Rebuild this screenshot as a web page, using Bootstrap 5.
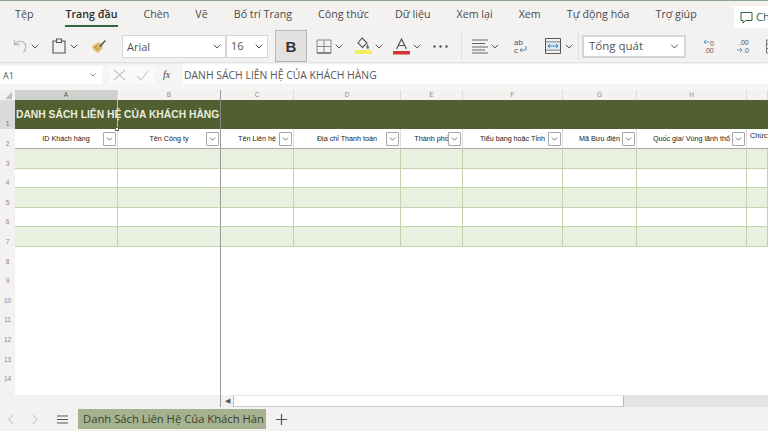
<!DOCTYPE html>
<html lang="vi">
<head>
<meta charset="utf-8">
<title>Danh sách liên hệ của khách hàng</title>
<link href="https://cdn.jsdelivr.net/npm/bootstrap@5.3.0/dist/css/bootstrap.min.css" rel="stylesheet">
<style>
html,body{width:768px;height:431px;overflow:hidden;background:#f3f2f1}
body{font-family:"Open Sans","Noto Sans",sans-serif;color:#444;display:flex;flex-direction:column}
.topline{height:1px;background:#8ea38f;flex:none}
.menu-row{height:29px;flex:none;font-size:10.7px;padding:0 0 2px 15px;gap:26px;color:#4a4a4a;overflow:hidden}
.menu-row .m-first{margin-right:6px}
.menu-row .m-on{font-weight:600;color:#2b2b2b;position:relative;height:100%;line-height:27px}
.menu-row .m-on::after{content:"";position:absolute;left:0;right:0;bottom:1px;height:2px;background:#33663f}
.cmt-btn{position:absolute;left:734px;top:5px;width:40px;height:22px;background:#fff;border-radius:2px;padding-left:6px;font-size:11px;color:#33663f;gap:3px}
.tool-row{height:32px;flex:none;background:#f3f2f1;box-shadow:0 1px 2px #d5d5d5;position:relative;z-index:3}
.tool-row svg{flex:none;display:block}
.ipt{height:23px;background:#fff;border:1px solid #d6d5d3;color:#555;flex:none}
.i-font{width:104px;margin-left:15px;font:11px "Open Sans",sans-serif;padding:0 4px}
.i-size{width:42px;margin-left:0;font-size:11px;padding:0 4px}
.i-fmt{width:104px;margin-left:3px;font-size:11.5px;padding:0 5px;border:2px solid #d6d5d3}
.b-btn{width:32px;height:32px;margin-left:7px;background:#e4e2e0;border:1px solid #b9b7b5;font:700 15px "Liberation Sans",sans-serif;color:#333;flex:none}
.t-undo{margin-left:13px}.t-c{margin-left:3px}.t-clip{margin-left:13px}.t-brush{margin-left:13px}
.t-bord{margin-left:9px}.t-fill{margin-left:12px}.t-a{margin-left:10px}.t-dots{margin-left:12px}
.t-sep{width:1px;height:28px;background:#e0dfdd;flex:none}.t-s1{margin-left:13px}.t-al{margin-left:10px}
.t-wrap{margin-left:14px}.t-mrg{margin-left:17px}.t-s2{margin-left:5px}
.t-d1{margin-left:17px}.t-d2{margin-left:18px}.t-d3{margin-left:15px}
.fx-row{height:28px;flex:none;background:#f5f5f4;position:relative}
.name-box{width:102px;height:18px;margin-top:4px;background:#fff;font:9px "Open Sans",sans-serif;padding:0 6px 0 3px;color:#555}
.fx-ic{width:46px;height:18px;margin:4px 0 0 7px;background:#fafafa;padding-left:4px;gap:10px;align-self:flex-start}
.fx-lbl{font:italic 10px "Liberation Serif",serif;color:#444;margin-left:8px;width:9px;line-height:18px;margin-top:4px;align-self:flex-start}
.fx-val{height:22px;flex:1;margin-left:11px;background:#fff;font-size:10.4px;line-height:26px;padding-left:1px;color:#555;white-space:nowrap;align-self:flex-start}
.sheet-grid{height:305px;flex:none;display:grid;grid-template-columns:15px 103px 103px 73px 107px 62px 100px 74px 110px 21px;grid-template-rows:10px 29px 20px repeat(12,19.6px) 1fr;background:#fff;font-family:"Liberation Sans",sans-serif}
.sheet-grid>div{min-width:0}
.ch{background:#f3f2f1;border-right:1px solid #dcdbd9;font:6.5px "Liberation Sans",sans-serif;color:#888;text-align:center;line-height:10px}
.ch-on{background:#d0d0ce;color:#555}
.ch-frz{border-right:1px solid #999}
.corner{background:#f3f2f1;display:flex;justify-content:flex-end;align-items:flex-end;padding:0 3px 1px 0}
.rh{background:#f3f2f1;font-size:6.5px;color:#888;display:flex;align-items:flex-end;justify-content:center;padding-bottom:1px;line-height:8px}
.rh-on{background:#dcdbd9;color:#666}
.ttl{background:#525f30;color:#e9eddf;font-weight:700;font-size:10.3px;line-height:29px;white-space:nowrap}
.ttl-a{padding-left:1px;border-right:1px solid #b9c0a8;position:relative;z-index:1}
.ttl-b{border-right:1px solid #888}
.ttl-r{grid-column:span 7}
.sel-dot{position:absolute;right:-2px;bottom:-2px;width:4px;height:4px;background:#fff;border:1px solid #4f6b3a;z-index:2}
.hd{position:relative;background:#fff;border-bottom:1px solid #a9a9a9;text-align:center;font-size:7.2px;line-height:20px;color:#222;white-space:nowrap;overflow:hidden}
.hd-b{border-right:1px solid #999}
.hd-last{text-align:left;line-height:13px;padding-left:3px}
.hd-ln{border-right:1px solid #ddd}
.flt{position:absolute;right:1px;top:3px;width:13px;height:14px;background:#fff;border:1px solid #a8a8a8;border-radius:1px;display:flex;align-items:center;justify-content:center}
.cl{border-right:1px solid #c6d2ae;border-bottom:1px solid #c6d2ae;background:#fff}
.cl-g{background:#e9f0df}
.cl-f{border-right:1px solid #999}
.ept-a{grid-column:span 2;border-right:1px solid #999}
.ept-b{grid-column:span 7}
.sb-row{height:12px;flex:none;display:flex;background:#f3f2f1}
.sb-side{width:221px;border-right:1px solid #999;flex:none}
.sb-arr{width:13px;background:#f1f1f1;border-right:1px solid #bbb;font-size:7px;display:flex;align-items:center;justify-content:center;color:#555;flex:none}
.sb-trk{width:390px;background:#fff;border-top:1px solid #e4e4e4;border-bottom:1px solid #ccc;border-right:1px solid #bbb;flex:none}
.sb-rest{flex:1;background:#e3e3e3}
.sheet-bar{height:24px;flex:none;background:#f3f2f1;position:relative}
.st-nav{margin-left:8px}
.st-menu{margin-left:19px}
.st-tab{margin-left:10px;width:188px;height:20px;background:#a6b18f;color:#37432a;font-size:11.25px;line-height:20px;padding-left:5px;white-space:nowrap;overflow:hidden}
.st-add{margin-left:10px}
</style>
</head>
<body>
<svg width="0" height="0" class="position-absolute">
  <symbol id="chev" viewBox="0 0 8 5"><path d="M.7.7 4 4 7.3.7" fill="none" stroke="#555" stroke-width="1"/></symbol>
</svg>
<div class="topline"></div>
<nav class="menu-row d-flex align-items-center position-relative">
  <span class="m-first">Tệp</span>
  <span class="m-on">Trang đầu</span>
  <span>Chèn</span>
  <span>Vẽ</span>
  <span>Bố trí Trang</span>
  <span>Công thức</span>
  <span>Dữ liệu</span>
  <span>Xem lại</span>
  <span>Xem</span>
  <span>Tự động hóa</span>
  <span>Trợ giúp</span>
  <span class="cmt-btn d-flex align-items-center">
    <svg width="13" height="13" viewBox="0 0 13 13"><path d="M1 1.500h11v8H5.500L3 12V9.500H1z" fill="none" stroke="#33663f" stroke-width="1"/></svg>
    <span>Ch</span>
  </span>
</nav>
<div class="tool-row d-flex align-items-center">
  <svg class="t-undo" width="15" height="16" viewBox="0 0 15 16"><path d="M1.500 1.500v5h5M1.800 6.300C3.500 3.500 7 2.500 10 4c3.500 2 3.800 6.500.5 10" fill="none" stroke="#b9b9b9" stroke-width="1.300"/></svg>
  <svg class="t-c" width="8" height="5"><use href="#chev"/></svg>
  <svg class="t-clip" width="14" height="16" viewBox="0 0 14 16"><path d="M1 3h12v12H1z" fill="none" stroke="#555" stroke-width="1.100"/><path d="M4.500 1h5v3.500h-5z" fill="#f3f2f1" stroke="#555" stroke-width="1.100"/></svg>
  <svg class="t-c ms-1" width="8" height="5"><use href="#chev"/></svg>
  <svg class="t-brush" width="16" height="15" viewBox="0 0 16 15"><path d="M1 7 8 3l4 6-5 5C5 13 2 11 1 7z" fill="#e2bb6a"/><path d="m8 7 4-4 2-2 1 1-2 2-3 4z" fill="#555"/><path d="m3 9 3-2m-1 4 3-2" stroke="#a5833d" stroke-width=".8"/></svg>
  <div class="ipt i-font d-flex align-items-center justify-content-between"><span>Arial</span><svg width="8" height="5"><use href="#chev"/></svg></div>
  <div class="ipt i-size d-flex align-items-center justify-content-between"><span>16</span><svg width="8" height="5"><use href="#chev"/></svg></div>
  <div class="b-btn d-flex align-items-center justify-content-center">B</div>
  <svg class="t-bord" width="16" height="15" viewBox="0 0 16 15"><path d="M1 1h14v13H1zM8 1v13M1 7.500h14" fill="none" stroke="#8a8a8a" stroke-width="1"/><path d="M1 14h14" stroke="#666" stroke-width="1.300"/></svg>
  <svg class="t-c" width="8" height="5"><use href="#chev"/></svg>
  <svg class="t-fill" width="17" height="18" viewBox="0 0 17 18"><path d="m7 1 5 5-4.500 4.500L3 6z" fill="none" stroke="#555" stroke-width="1.100"/><path d="M12 7c1 1.500 2 2.500 2 3.500a1 1 0 0 1-2.500 0C11.500 9 12 8.500 12 7z" fill="#2f6f8f"/><path d="M0 13h17v4H0z" fill="#f2ee5c"/></svg>
  <svg class="t-c" width="8" height="5"><use href="#chev"/></svg>
  <svg class="t-a" width="17" height="17" viewBox="0 0 17 17"><path d="m3.500 11 5-10 5 10M5.500 7.500h6" fill="none" stroke="#555" stroke-width="1.200"/><path d="M0 13h17v3.500H0z" fill="#d13438"/></svg>
  <svg class="t-c" width="8" height="5"><use href="#chev"/></svg>
  <svg class="t-dots" width="15" height="3" viewBox="0 0 15 3"><circle cx="1.500" cy="1.500" r="1.200" fill="#555"/><circle cx="7.500" cy="1.500" r="1.200" fill="#555"/><circle cx="13.500" cy="1.500" r="1.200" fill="#555"/></svg>
  <span class="t-sep t-s1"></span>
  <svg class="t-al" width="16" height="15" viewBox="0 0 16 15"><path d="M0 1h16M0 4.500h13M0 8h16M0 11h13M0 14h16" stroke="#666" stroke-width="1"/></svg>
  <svg class="t-c" width="8" height="5"><use href="#chev"/></svg>
  <svg class="t-wrap" width="15" height="17" viewBox="0 0 15 17"><text x="1" y="7" font-family="Liberation Sans" font-size="8" fill="#555">ab</text><text x="1" y="15" font-family="Liberation Sans" font-size="8" fill="#555">c</text><path d="M13 8v4H7m2-2-2 2 2 2" fill="none" stroke="#4a90c0" stroke-width="1"/></svg>
  <svg class="t-mrg" width="16" height="16" viewBox="0 0 16 16"><path d="M.5.500h15v15H.500z" fill="none" stroke="#555"/><path d="M.5 4h15M.5 12h15" stroke="#555"/><path d="M1 4.500h14v7H1z" fill="#dfeaf3"/><path d="M3 8h10M5 6 3 8l2 2m6-4 2 2-2 2" fill="none" stroke="#2f7cb5" stroke-width=".9"/></svg>
  <svg class="t-c ms-1" width="8" height="5"><use href="#chev"/></svg>
  <span class="t-sep t-s2"></span>
  <div class="ipt i-fmt d-flex align-items-center justify-content-between"><span>Tổng quát</span><svg width="9" height="5"><use href="#chev"/></svg></div>
  <svg class="t-d1" width="15" height="15" viewBox="0 0 15 15"><path d="M6 3H1m2-2L1 3l2 2" fill="none" stroke="#4a90c0" stroke-width=".9"/><text x="7" y="7" font-family="Liberation Sans" font-size="7" fill="#555">0</text><text x="1" y="14" font-family="Liberation Sans" font-size="7" fill="#555">.00</text></svg>
  <svg class="t-d2" width="15" height="15" viewBox="0 0 15 15"><text x="3" y="6" font-family="Liberation Sans" font-size="7" fill="#555">.00</text><path d="M1 11h5m-2-2 2 2-2 2" fill="none" stroke="#4a90c0" stroke-width=".9"/><text x="7" y="14" font-family="Liberation Sans" font-size="7" fill="#555">.0</text></svg>
  <svg class="t-d3" width="14" height="15" viewBox="0 0 14 15"><path d="M.5 1h13v13H.5zM.5 5h13M.5 9.500h13" fill="none" stroke="#777"/></svg>
</div>
<div class="fx-row d-flex">
  <div class="name-box d-flex align-items-center justify-content-between"><span>A1</span><svg width="6" height="4"><use href="#chev"/></svg></div>
  <div class="fx-ic d-flex align-items-center">
    <svg width="13" height="12" viewBox="0 0 13 12"><path d="m1 1 11 10M12 1 1 11" stroke="#c4c4c4" stroke-width="1.100"/></svg>
    <svg width="13" height="11" viewBox="0 0 13 11"><path d="m1 6 4 4 7-9" fill="none" stroke="#c4c4c4" stroke-width="1.100"/></svg>
  </div>
  <span class="fx-lbl">fx</span>
  <div class="fx-val">DANH SÁCH LIÊN HỆ CỦA KHÁCH HÀNG</div>
</div>
<div class="sheet-grid">
  <div class="corner"><svg width="7" height="7" viewBox="0 0 7 7"><path d="M7 0v7H0z" fill="#bdbdbd"/></svg></div>
  <div class="ch ch-on">A</div><div class="ch ch-frz">B</div><div class="ch">C</div><div class="ch">D</div><div class="ch">E</div><div class="ch">F</div><div class="ch">G</div><div class="ch">H</div><div class="ch"></div>

  <div class="rh rh-on">1</div>
  <div class="ttl ttl-a">DANH SÁCH LIÊN HỆ CỦA KHÁCH HÀNG<span class="sel-dot"></span></div>
  <div class="ttl ttl-b"></div>
  <div class="ttl ttl-r"></div>

  <div class="rh">2</div>
  <div class="hd hd-ln">ID Khách hàng<span class="flt"><svg width="7" height="4"><use href="#chev"/></svg></span></div>
  <div class="hd hd-b">Tên Công ty<span class="flt"><svg width="7" height="4"><use href="#chev"/></svg></span></div>
  <div class="hd hd-ln">Tên Liên hệ<span class="flt"><svg width="7" height="4"><use href="#chev"/></svg></span></div>
  <div class="hd hd-ln">Địa chỉ Thanh toán<span class="flt"><svg width="7" height="4"><use href="#chev"/></svg></span></div>
  <div class="hd hd-ln">Thành phố<span class="flt"><svg width="7" height="4"><use href="#chev"/></svg></span></div>
  <div class="hd hd-ln">Tiểu bang hoặc Tỉnh<span class="flt"><svg width="7" height="4"><use href="#chev"/></svg></span></div>
  <div class="hd hd-ln">Mã Bưu điện<span class="flt"><svg width="7" height="4"><use href="#chev"/></svg></span></div>
  <div class="hd hd-ln">Quốc gia/ Vùng lãnh thổ<span class="flt"><svg width="7" height="4"><use href="#chev"/></svg></span></div>
  <div class="hd hd-last">Chức</div>

  <div class="rh">3</div><div class="cl cl-g"></div><div class="cl cl-g cl-f"></div><div class="cl cl-g"></div><div class="cl cl-g"></div><div class="cl cl-g"></div><div class="cl cl-g"></div><div class="cl cl-g"></div><div class="cl cl-g"></div><div class="cl cl-g"></div>
  <div class="rh">4</div><div class="cl"></div><div class="cl cl-f"></div><div class="cl"></div><div class="cl"></div><div class="cl"></div><div class="cl"></div><div class="cl"></div><div class="cl"></div><div class="cl"></div>
  <div class="rh">5</div><div class="cl cl-g"></div><div class="cl cl-g cl-f"></div><div class="cl cl-g"></div><div class="cl cl-g"></div><div class="cl cl-g"></div><div class="cl cl-g"></div><div class="cl cl-g"></div><div class="cl cl-g"></div><div class="cl cl-g"></div>
  <div class="rh">6</div><div class="cl"></div><div class="cl cl-f"></div><div class="cl"></div><div class="cl"></div><div class="cl"></div><div class="cl"></div><div class="cl"></div><div class="cl"></div><div class="cl"></div>
  <div class="rh">7</div><div class="cl cl-g"></div><div class="cl cl-g cl-f"></div><div class="cl cl-g"></div><div class="cl cl-g"></div><div class="cl cl-g"></div><div class="cl cl-g"></div><div class="cl cl-g"></div><div class="cl cl-g"></div><div class="cl cl-g"></div>

  <div class="rh">8</div><div class="ept-a"></div><div class="ept-b"></div>
  <div class="rh">9</div><div class="ept-a"></div><div class="ept-b"></div>
  <div class="rh">10</div><div class="ept-a"></div><div class="ept-b"></div>
  <div class="rh">11</div><div class="ept-a"></div><div class="ept-b"></div>
  <div class="rh">12</div><div class="ept-a"></div><div class="ept-b"></div>
  <div class="rh">13</div><div class="ept-a"></div><div class="ept-b"></div>
  <div class="rh">14</div><div class="ept-a"></div><div class="ept-b"></div>
  <div class="rh"></div><div class="ept-a"></div><div class="ept-b"></div>
</div>
<div class="sb-row">
  <div class="sb-side"></div>
  <div class="sb-arr">◀</div>
  <div class="sb-trk"></div>
  <div class="sb-rest"></div>
</div>
<div class="sheet-bar d-flex align-items-center">
  <svg class="st-nav" width="30" height="11" viewBox="0 0 30 11"><path d="M5 1 1 5.500 5 10M25 1l4 4.500-4 4.500" fill="none" stroke="#c8c8c8" stroke-width="1.100"/></svg>
  <svg class="st-menu" width="11" height="9" viewBox="0 0 11 9"><path d="M0 1h11M0 4.500h11M0 8h11" stroke="#555" stroke-width="1.200"/></svg>
  <div class="st-tab">Danh Sách Liên Hệ Của Khách Hàn</div>
  <svg class="st-add" width="11" height="11" viewBox="0 0 11 11"><path d="M5.500 0v11M0 5.500h11" stroke="#555" stroke-width="1.200"/></svg>
</div>
</body>
</html>
